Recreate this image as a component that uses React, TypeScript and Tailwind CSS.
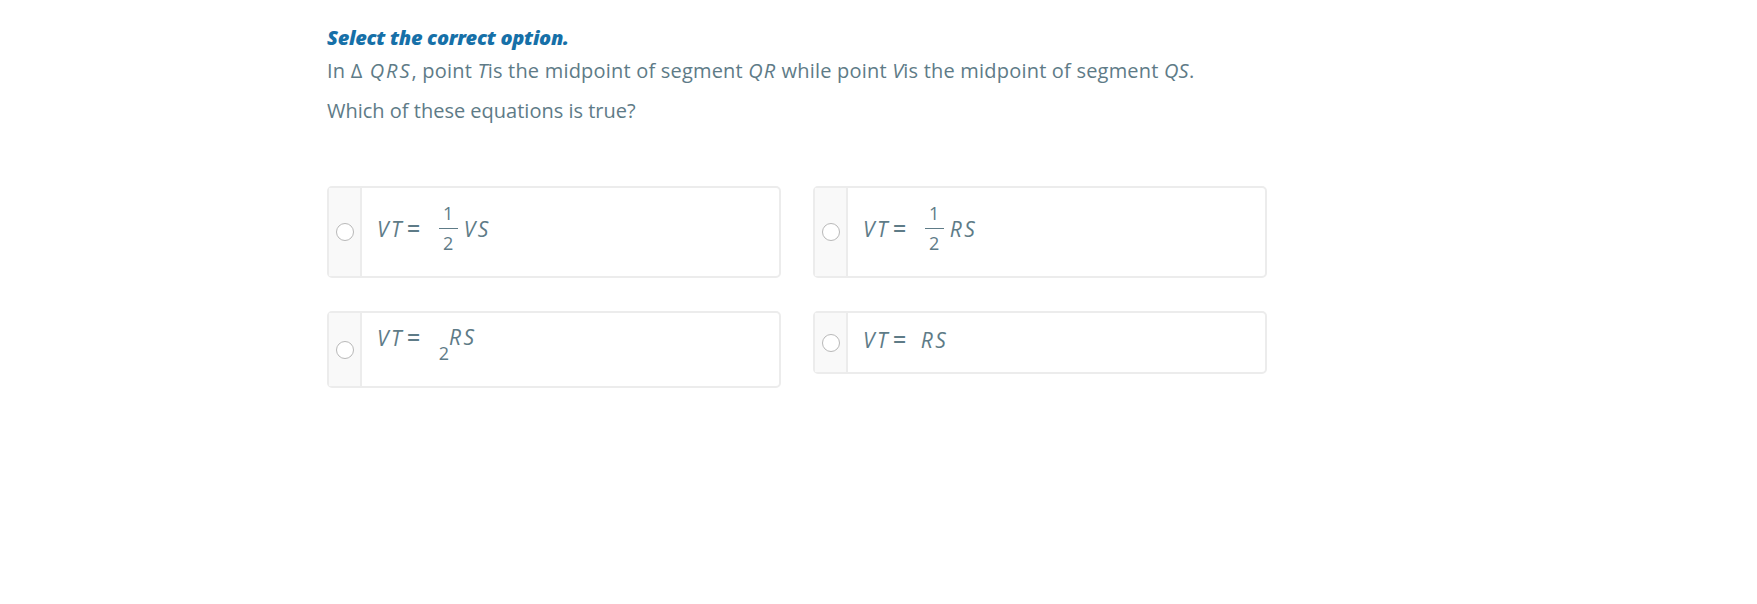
import { ReactNode } from "react";

const ink = "text-[#5e7b87]";

function Frac({ num, den }: { num: string; den: string }) {
  return (
    <span className="ml-[16px] mr-[6px] inline-flex flex-col items-center not-italic tracking-normal">
      <span className="text-[18px] leading-[23px]">{num}</span>
      <span className="my-[3px] h-px w-[19px] bg-[#5e7b87]" />
      <span className="text-[18px] leading-[23px]">{den}</span>
    </span>
  );
}

function Option({ children, pad = "pt-[11px] pb-[17px]" }: { children: ReactNode; pad?: string }) {
  return (
    <div className="flex self-start rounded-[5px] border-2 border-[#ececec] bg-white">
      <div className="flex w-[33px] shrink-0 items-center justify-center border-r-2 border-[#ececec] bg-[#f9f9f9]">
        <span className="h-[18px] w-[18px] rounded-full border border-[#b8b8b8] bg-white" />
      </div>
      <div className={`flex flex-1 items-center pl-[15px] text-[21px] leading-[30px] tracking-[2.5px] ${pad} ${ink}`}>
        {children}
      </div>
    </div>
  );
}

function VT() {
  return (
    <span className="italic">
      VT<span className="ml-[3px] text-[23px] font-semibold not-italic">=</span>
    </span>
  );
}

export default function App() {
  return (
    <div className="min-h-[604px] bg-white" style={{ fontFamily: "'Open Sans', Lato, sans-serif" }}>
      <div className="ml-[327px] w-[940px] pt-[24px]">
        <h1 className="text-[20px] font-extrabold italic leading-[28px] tracking-[-0.3px] text-[#1670a8]">Select the correct option.</h1>
        <p className={`mt-[5px] text-[20px] leading-[28px] tracking-[0.2px] ${ink}`}>
          In <span className="tracking-[2px]">Δ</span> <span className="italic tracking-[2px]">QRS</span>, point <span className="italic">T</span>is the midpoint of segment <span className="italic tracking-[1px]">QR</span> while point <span className="italic">V</span>is the midpoint of segment <span className="italic">QS</span>.
        </p>
        <p className={`mt-[12px] text-[20px] leading-[28px] ${ink}`}>Which of these equations is true?</p>

        <div className="mt-[61px] grid grid-cols-2 gap-x-[32px] gap-y-[33px]">
          <Option pad="pt-[14px] pb-[21px]">
            <VT />
            <Frac num="1" den="2" />
            <span className="italic">VS</span>
          </Option>
          <Option pad="pt-[14px] pb-[21px]">
            <VT />
            <Frac num="1" den="2" />
            <span className="italic">RS</span>
          </Option>
          <Option pad="pt-[9px] pb-[23px] !items-start">
            <VT />
            <span className="ml-[16px] mt-[21px] text-[18px] leading-[20px] tracking-normal">2</span>
            <span className="italic">RS</span>
          </Option>
          <Option>
            <VT />
            <span className="ml-[12px] italic">RS</span>
          </Option>
        </div>
      </div>
    </div>
  );
}
